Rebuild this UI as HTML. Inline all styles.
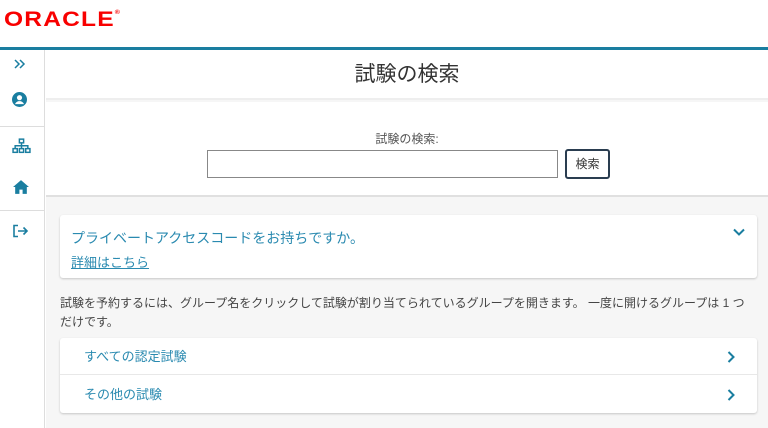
<!DOCTYPE html>
<html><head><meta charset="utf-8"><style>
*{box-sizing:border-box;margin:0;padding:0}
body{width:768px;height:428px;overflow:hidden;background:#fff;font-family:"Liberation Sans","Noto Sans CJK JP",sans-serif;color:#333;position:relative}
.hdr{position:absolute;left:0;top:0;width:768px;height:47px;background:#fff}
.logo{position:absolute;left:4px;top:8px;color:#f80000;font-weight:bold;font-size:21px;letter-spacing:1px;font-family:"Liberation Sans",sans-serif;transform:scaleX(1.17);transform-origin:0 0}
.logo sup{font-size:6px;vertical-align:top;position:relative;top:2px}
.bar{position:absolute;left:0;top:47px;width:768px;height:3px;background:#1a7ea0}
.side{position:absolute;left:0;top:50px;width:45px;height:378px;border-right:1px solid #ddd;background:#fff}
.sep{position:absolute;left:0;width:45px;height:1px;background:#ddd}
.ic{position:absolute;left:12px}
.main{position:absolute;left:46px;top:50px;width:722px;height:378px;background:#f6f6f6}
.title{position:absolute;left:0;top:0;width:722px;height:50px;background:#fff;border-bottom:2px solid #eee;text-align:center;font-size:21px;line-height:50px;color:#333}
.srch{position:absolute;left:0;top:52px;width:722px;height:95px;background:#fff;border-bottom:2px solid #e0e0e0}
.lbl{position:absolute;left:0;width:722px;top:28px;text-align:center;font-size:12px;color:#555}
.inp{position:absolute;left:161px;top:48px;width:351px;height:28px;border:1px solid #888;background:#fff}
.btn{position:absolute;left:519px;top:47px;width:45px;height:30px;border:2px solid #2a3d50;border-radius:3px;font-size:12px;text-align:center;line-height:26px;color:#333}
.card{position:absolute;left:14px;background:#fff;border-radius:3px;box-shadow:0 1px 2px rgba(0,0,0,.2);width:697px}
.c1{top:165px;height:63px}
.c1 .t{position:absolute;left:11px;top:13px;font-size:14px;color:#2a8ab0}
.c1 .l{position:absolute;left:11px;top:37px;font-size:13px;color:#2a8ab0;text-decoration:underline}
.p{position:absolute;left:14px;top:244px;width:690px;font-size:12px;line-height:19px;color:#444}
.c2{top:288px;height:75px}
.row{position:absolute;left:0;width:697px;height:37px;font-size:13px;color:#2a8ab0;padding-left:24px;line-height:37px}
.chev{position:absolute;right:22px;top:13px}
</style></head><body>
<div class="hdr"><div class="logo">ORACLE<sup>®</sup></div></div>
<div class="bar"></div>
<div class="side">
<svg class="ic" style="top:9px;left:14px" width="12" height="10" viewBox="0 0 12 10"><path d="M1 1l4 4-4 4M6 1l4 4-4 4" fill="none" stroke="#1a7ea0" stroke-width="1.5"/></svg>
<svg class="ic" style="top:42px;left:12px" width="15" height="15" viewBox="0 0 14 14"><circle cx="7" cy="7" r="7" fill="#1a7ea0"/><circle cx="7" cy="5.3" r="2.4" fill="#fff"/><path d="M2.8 11.3c1-2 2.4-2.8 4.2-2.8s3.2.8 4.2 2.8" fill="#fff"/></svg>
<div class="sep" style="top:76px"></div>
<svg class="ic" style="top:88px;left:12px" width="19" height="16" viewBox="0 0 18 15"><g fill="none" stroke="#1a7ea0" stroke-width="1.4"><rect x="7" y="1" width="4" height="3.5"/><rect x="1" y="10" width="4" height="3.5"/><rect x="7" y="10" width="4" height="3.5"/><rect x="13" y="10" width="4" height="3.5"/><path d="M9 4.5V10M3 10V7.3h12V10"/></g></svg>
<svg class="ic" style="top:129px;left:12px" width="18" height="15" viewBox="0 0 17 14"><path d="M8.5 1L1 7.5h2V14h4V10h3v4h4V7.5h2z" fill="#1a7ea0"/></svg>
<div class="sep" style="top:160px"></div>
<svg class="ic" style="top:174px;left:12px" width="17" height="14" viewBox="0 0 17 14"><g fill="none" stroke="#1a7ea0" stroke-width="1.6"><path d="M6 1.5H2v11h4M6 7h9M11.5 3.5L15 7l-3.5 3.5"/></g></svg>
</div>
<div class="main">
<div class="title">試験の検索</div>
<div class="srch"><div class="lbl">試験の検索:</div><div class="inp"></div><div class="btn">検索</div></div>
<div class="card c1"><div class="t">プライベートアクセスコードをお持ちですか。</div><div class="l">詳細はこちら</div>
<svg style="position:absolute;right:12px;top:13px" width="12" height="8" viewBox="0 0 12 8"><path d="M1 1.5l5 5 5-5" fill="none" stroke="#1a7ea0" stroke-width="2"/></svg></div>
<div class="p">試験を予約するには、グループ名をクリックして試験が割り当てられているグループを開きます。 一度に開けるグループは 1 つ<br>だけです。</div>
<div class="card c2">
<div class="row" style="top:0;border-bottom:1px solid #e8e8e8">すべての認定試験<svg class="chev" width="8" height="12" viewBox="0 0 8 12"><path d="M1.5 1l5 5-5 5" fill="none" stroke="#1a7ea0" stroke-width="2"/></svg></div>
<div class="row" style="top:38px">その他の試験<svg class="chev" width="8" height="12" viewBox="0 0 8 12"><path d="M1.5 1l5 5-5 5" fill="none" stroke="#1a7ea0" stroke-width="2"/></svg></div>
</div>
</div>
</body></html>
